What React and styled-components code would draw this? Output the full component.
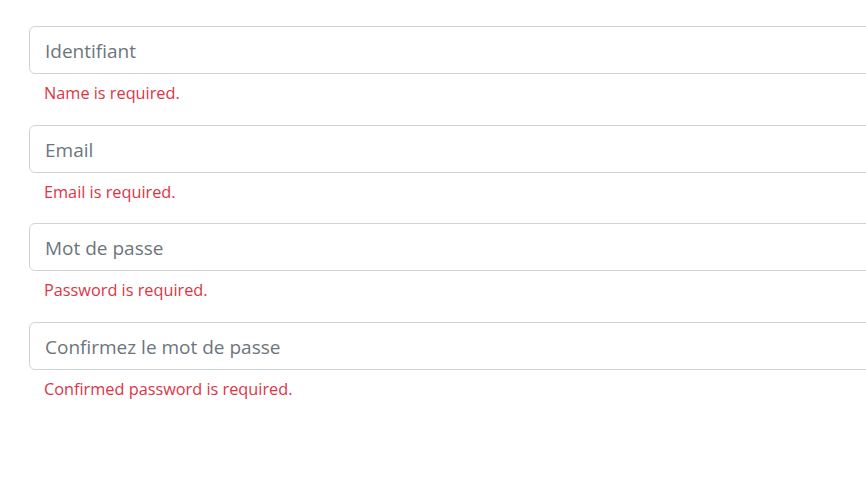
import styled, { createGlobalStyle } from 'styled-components';

const GlobalStyle = createGlobalStyle`
    html, body {
        margin: 0;
        padding: 0;
        overflow: hidden;
        background: #fff;
    }
    body {
        font-family: "Open Sans", "Noto Sans", "Liberation Sans", sans-serif;
    }
`

const fields = [
    { placeholder: 'Identifiant', error: 'Name is required.' },
    { placeholder: 'Email', error: 'Email is required.' },
    { placeholder: 'Mot de passe', error: 'Password is required.', type: 'password' },
    { placeholder: 'Confirmez le mot de passe', error: 'Confirmed password is required.', type: 'password' },
]

const App = () => {
    return (
        <>
            <GlobalStyle />
            <Form onSubmit={(e) => e.preventDefault()}>
                {fields.map((f) => (
                    <FormGroup key={f.placeholder}>
                        <Input type={f.type || 'text'} placeholder={f.placeholder} />
                        <Feedback>{f.error}</Feedback>
                    </FormGroup>
                ))}
            </Form>
        </>
    )
}

const Form = styled.form`
    padding: 26px 0 0 29px;
    width: 920px;
`

const FormGroup = styled.div`
    display: flex;
    flex-direction: column;
    margin-bottom: 18.6px;
`

const Input = styled.input`
    box-sizing: border-box;
    height: 48px;
    width: 100%;
    padding: 2px 15px 0;
    font-family: "Open Sans", "Noto Sans", sans-serif;
    font-size: 19px;
    color: #495057;
    background: #fff;
    border: 1px solid #ced4da;
    border-radius: 6px;
    outline: none;

    &::placeholder {
        color: #6c757d;
        opacity: 1;
    }
`

const Feedback = styled.div`
    margin-top: 6px;
    padding-left: 15px;
    font-family: "Open Sans", "Noto Sans", sans-serif;
    font-size: 16.3px;
    line-height: 26px;
    color: #dc3545;
`

export default App;
